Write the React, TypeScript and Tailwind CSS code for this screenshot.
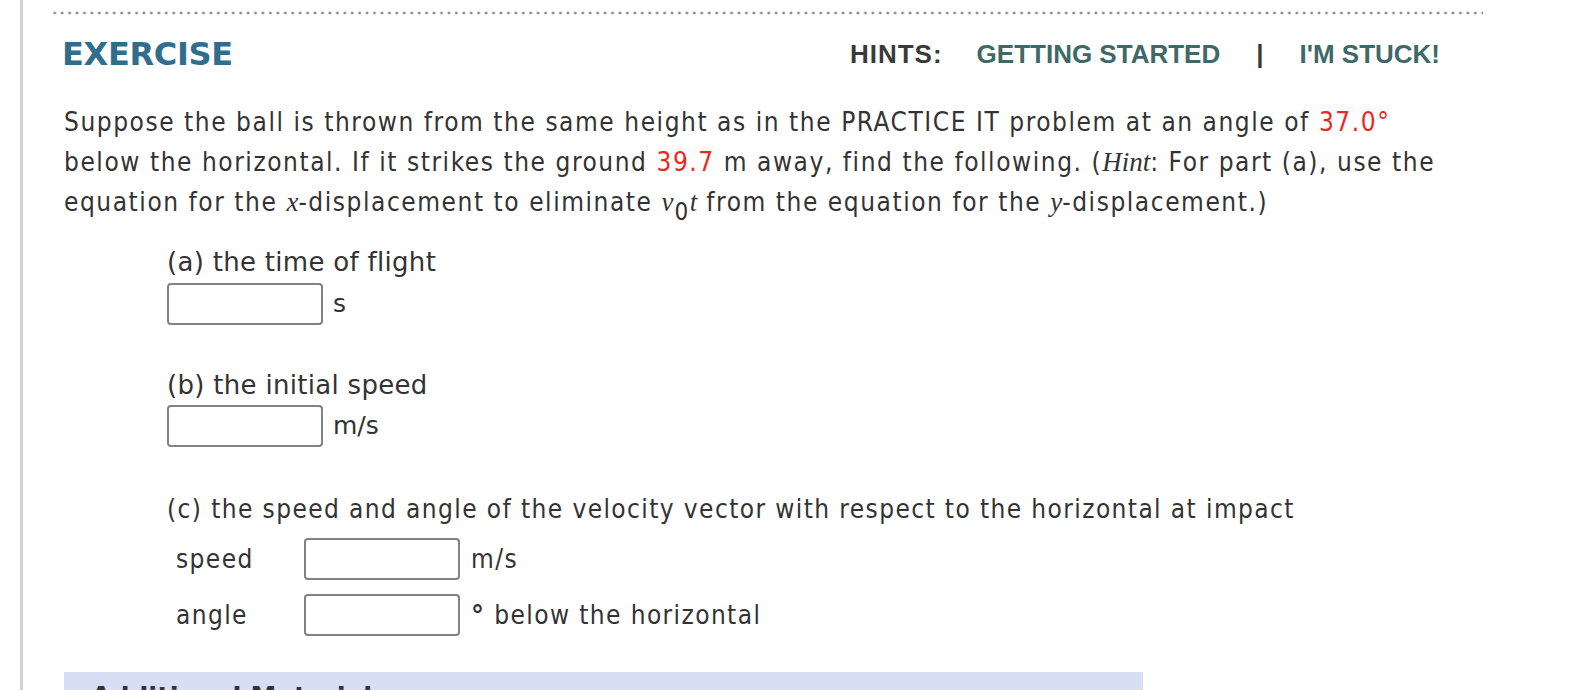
import { FC } from "react";

const Red: FC<{ children: React.ReactNode }> = ({ children }) => <span className="text-[#e8291f]">{children}</span>;

const Var: FC<{ children: React.ReactNode }> = ({ children }) => (
  <span className="font-['Liberation_Serif',serif] italic text-[27px] tracking-normal">{children}</span>
);

const AnswerBox: FC = () => (
  <input type="text" className="w-[156px] h-[42px] border-2 border-[#828282] rounded-[4px] bg-white outline-none" />
);

const App: FC = () => {
  return (
    <div className="min-h-screen bg-white pl-5 font-['DejaVu_Sans_Condensed','DejaVu_Sans',sans-serif] text-[#333]">
      <div className="border-l-[3px] border-[#d2d2d2] h-[690px] overflow-hidden pl-[28px]">
        {/* dotted rule */}
        <div className="mt-[11px] h-[4px] w-[1432px] bg-[radial-gradient(circle,#8c8c8c_1.2px,transparent_1.7px)] bg-[length:7.45px_4px] bg-repeat-x" />

        <div className="w-[1430px] flex items-center justify-between pl-[11px] pr-[41px] mt-[22px] h-[34px]">
          <h2 className="font-['DejaVu_Sans',sans-serif] font-bold text-[32px] leading-none text-[#2f6e8d] tracking-[-0.3px]">EXERCISE</h2>
          <div className="flex items-center font-['Liberation_Sans_Narrow','Liberation_Sans',sans-serif] font-bold text-[26px] leading-none">
            <span className="text-[#3a3a3a] tracking-[1px]">HINTS:</span>
            <span className="ml-[34px] text-[#3f6868]">GETTING STARTED</span>
            <span className="ml-[36px] text-[#3a3a3a]">|</span>
            <span className="ml-[36px] text-[#3f6868]">I'M STUCK!</span>
          </div>
        </div>

        <div className="pl-[13px] mt-[31px]">
          <p className="text-[26px] leading-[40px] w-[1450px] tracking-[1.55px]">
            Suppose the ball is thrown from the same height as in the PRACTICE IT problem at an angle of <Red>37.0°</Red>
            <br />
            below the horizontal. If it strikes the ground <Red>39.7</Red> m away, find the following. (<Var>Hint</Var>: For part (a), use the
            <br />
            equation for the <Var>x</Var>-displacement to eliminate <Var>v</Var>
            <sub className="text-[24px] leading-none relative top-[9px] bottom-auto ml-[1px]">0</sub>
            <Var>t</Var> from the equation for the <Var>y</Var>-displacement.)
          </p>

          <div className="pl-[103px] mt-[20px]">
            <div className="font-['DejaVu_Sans',sans-serif] text-[26px] leading-[40px] tracking-[0.3px]">(a) the time of flight</div>
            <div className="flex items-center gap-[10px] mt-[1px]">
              <AnswerBox />
              <span className="font-['DejaVu_Sans',sans-serif] text-[25px]">s</span>
            </div>

            <div className="font-['DejaVu_Sans',sans-serif] text-[26px] leading-[40px] tracking-[0.3px] mt-[40px]">(b) the initial speed</div>
            <div className="flex items-center gap-[10px] mt-[0px]">
              <AnswerBox />
              <span className="font-['DejaVu_Sans',sans-serif] text-[25px]">m/s</span>
            </div>

            <div className="text-[26px] leading-[40px] tracking-[1.4px] mt-[42px]">
              (c) the speed and angle of the velocity vector with respect to the horizontal at impact
            </div>
            <div className="pl-[9px] mt-[9px] flex flex-col gap-[14px] tracking-[1.4px]">
              <div className="flex items-center">
                <span className="w-[128px] text-[26px]">speed</span>
                <AnswerBox />
                <span className="ml-[11px] text-[26px]">m/s</span>
              </div>
              <div className="flex items-center">
                <span className="w-[128px] text-[26px]">angle</span>
                <AnswerBox />
                <span className="ml-[11px] text-[26px]">
                  <span className="font-['DejaVu_Sans',sans-serif] font-bold">°</span> below the horizontal
                </span>
              </div>
            </div>
          </div>

          <div className="mt-[36px] w-[1079px] h-[60px] bg-[#d6dff3] pl-[27px] pt-[5px]">
            <span className="font-['DejaVu_Sans',sans-serif] font-bold text-[26px] leading-[40px] text-[#333]">Additional Materials</span>
          </div>
        </div>
      </div>
    </div>
  );
};

export default App;
